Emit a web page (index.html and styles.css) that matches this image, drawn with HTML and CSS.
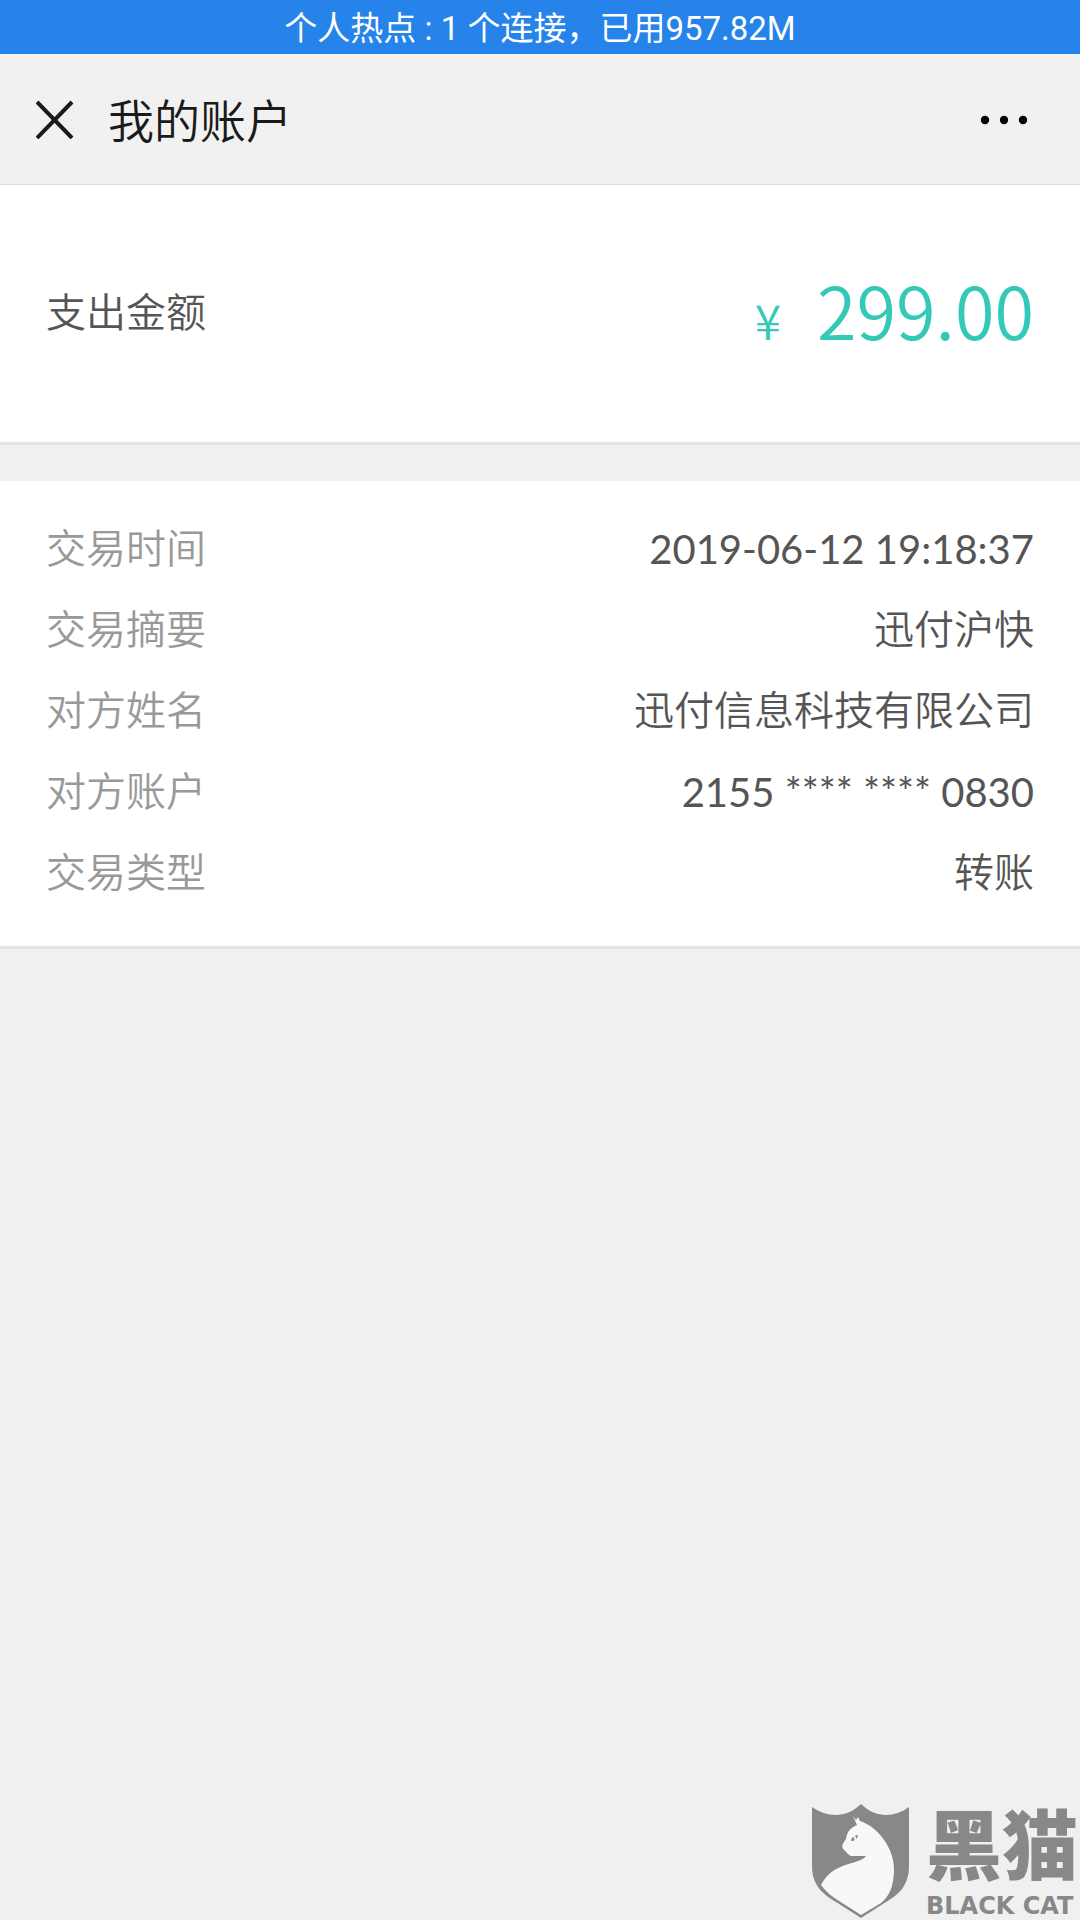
FILE: index.html
```html
<!DOCTYPE html>
<html lang="zh-CN">
<head>
  <meta charset="UTF-8" />
  <meta name="viewport" content="width=device-width" />
  <title>我的账户</title>
  <link rel="stylesheet" href="styles.css">
</head>
<body>

<div class="hotspot">个人热点 : 1 个连接，已用957.82M</div>

<header class="navbar">
  <button class="icon-btn" aria-label="关闭">
    <svg width="38" height="40" viewBox="0 0 38 40">
      <path d="M1 3L36 39M36 3L1 39" fill="none" stroke="#1a1a1a" stroke-width="4"/>
    </svg>
  </button>
  <h1>我的账户</h1>
  <button class="icon-btn more" aria-label="更多">
    <svg width="48" height="12" viewBox="0 0 48 12">
      <circle cx="5" cy="7" r="4.200"/>
      <circle cx="24" cy="7" r="4.200"/>
      <circle cx="43" cy="7" r="4.200"/>
    </svg>
  </button>
</header>

<main>
  <section class="card amount">
    <span class="amount-label">支出金额</span>
    <span class="amount-value"><span class="currency">¥</span><span>299.00</span></span>
  </section>

  <dl class="card details">
    <div class="row"><dt>交易时间</dt><dd class="num">2019-06-12 19:18:37</dd></div>
    <div class="row"><dt>交易摘要</dt><dd>迅付沪快</dd></div>
    <div class="row"><dt>对方姓名</dt><dd>迅付信息科技有限公司</dd></div>
    <div class="row"><dt>对方账户</dt><dd class="num">2155 **** **** 0830</dd></div>
    <div class="row"><dt>交易类型</dt><dd>转账</dd></div>
  </dl>
</main>

<!-- watermark -->
<div class="watermark">
  <svg width="98" height="115" viewBox="0 0 98 115">
    <path d="M0 3C16 14 35 14 49 0C63 14 82 14 97 3V62C97 82 86 91 74 98L49 114L24 98C12 91 0 82 0 62Z" fill="#8a8788"/>
    <path d="M41 12L44 16L46 13L48 17C66 23 82 44 82 65C82 82 77 93 69 99L49 111L24 95Q15 89 9 81C19 62 36 61 46 57Q52 55 54 52H39C35 50 34 47 31 45C29 41 32 38 34 35C35 28 38 24 45 21Z" fill="#f8f8f8"/>
    <path d="M39 36Q41 31 46 31Q45 37 39 37Z" fill="#8a8788"/>
    <path d="M42 31L44 37" stroke="#f8f8f8" stroke-width="2"/>
  </svg>
  <div class="brand">
    <span class="brand-cn">黑猫</span>
    <span class="brand-en">BLACK CAT</span>
  </div>
</div>

</body>
</html>
```
FILE: styles.css
```css
* {
  box-sizing: border-box;
}
body {
  margin: 0;
  min-height: 100vh;
  position: relative;
  background-color: #f0f0f0;
  color: #555;
  font-family: Roboto, "Noto Sans CJK SC", sans-serif;
  font-weight: 350;
  font-size: 40px;
}
.hotspot {
  height: 54px;
  line-height: 58px;
  background-color: #2583e9;
  color: #fff;
  font-size: 33px;
  font-weight: 400;
  text-align: center;
}

/* title bar */
.navbar {
  display: flex;
  align-items: center;
  height: 131px;
  padding: 0 52px 0 36px;
  background-color: #f1f1f1;
  border-bottom: 1px solid #dedede;
}
.navbar h1 {
  margin: 0 0 0 34px;
  padding-top: 6px;
  color: #1a1a1a;
  font-size: 46px;
  line-height: 64px;
  font-weight: 350;
}
.icon-btn {
  display: flex;
  padding: 0;
  border: 0;
  background: none;
}
.more {
  margin-left: auto;
}

.card {
  background-color: #fff;
  border-bottom: 3px solid #e4e4e4;
  padding: 0 46px;
}
.amount {
  display: flex;
  justify-content: space-between;
  align-items: center;
  height: 260px;
}
.amount-label {
  padding-bottom: 8px;
}
.amount-value {
  display: flex;
  align-items: baseline;
  gap: 36px;
  color: #34c9b7;
  font-family: "Noto Sans CJK SC", sans-serif;
  font-size: 72px;
  line-height: 100px;
}
.currency {
  font-size: 48px;
}

.details {
  margin: 36px 0 0;
  padding-top: 28px;
  padding-bottom: 32px;
}
.row {
  display: flex;
  justify-content: space-between;
  line-height: 81px;
}
.row dt {
  color: #999;
}
.row dd {
  margin: 0;
}
.row .num {
  font-family: Lato, sans-serif;
  font-weight: 400;
}

.watermark {
  position: absolute;
  right: 2px;
  bottom: 0;
  display: flex;
  gap: 16px;
  color: #8a8788;
}
.brand {
  display: flex;
  flex-direction: column;
  justify-content: flex-end;
  font-weight: 900;
}
.brand-cn {
  font-family: "Liberation Sans", "Noto Sans CJK SC", sans-serif;
  font-size: 76px;
  line-height: 88px;
}
.brand-en {
  font-family: "DejaVu Sans", sans-serif;
  font-size: 24px;
  line-height: 28px;
}
```
